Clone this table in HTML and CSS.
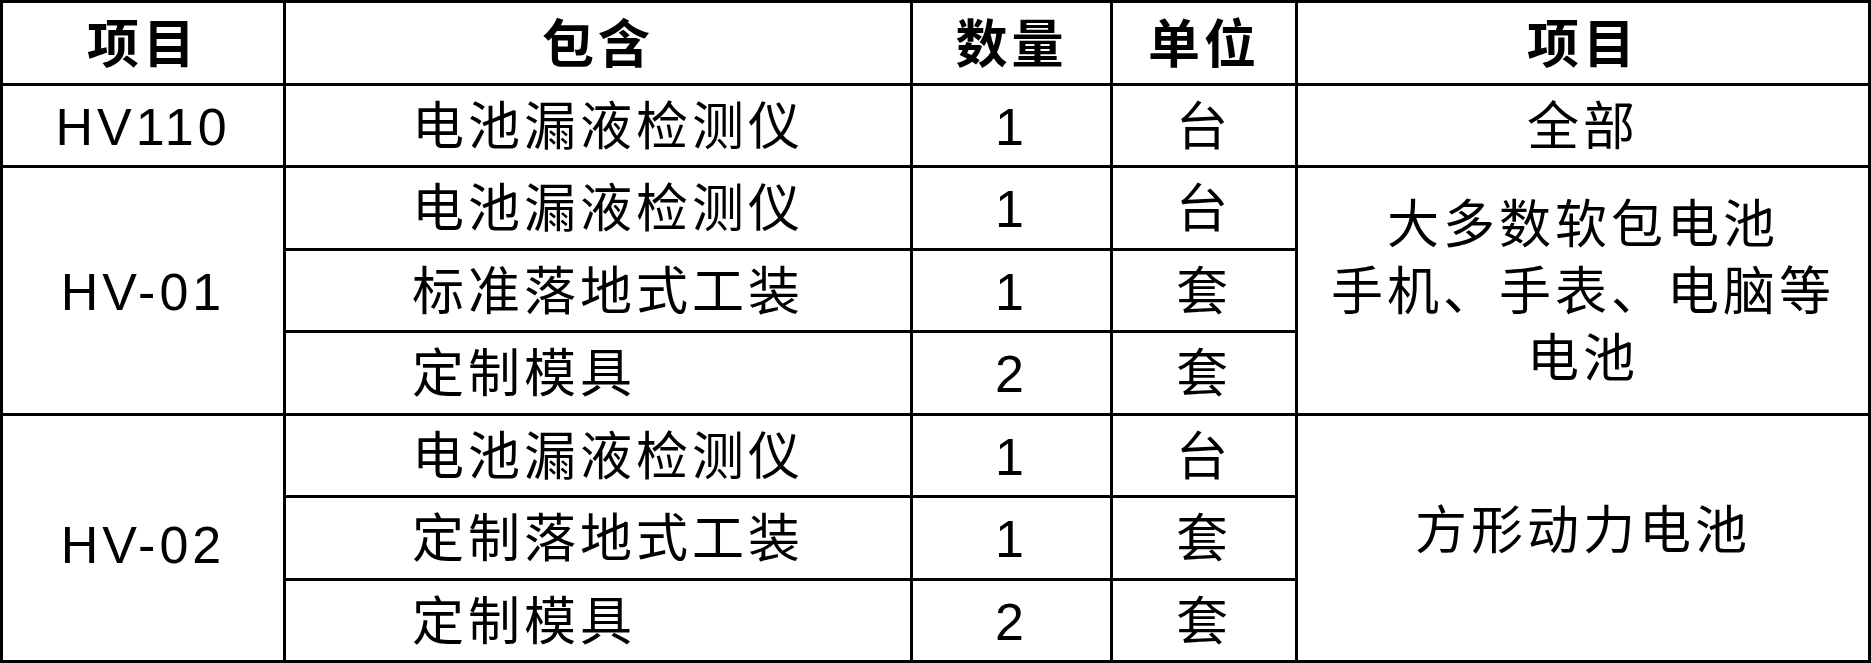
FILE: index.html
```html
<!DOCTYPE html>
<html lang="zh-CN">
<head>
<meta charset="utf-8">
<title>产品配置表</title>
<link rel="stylesheet" href="styles.css">
</head>
<body>
<table class="spec">
  <colgroup>
    <col class="c-model">
    <col class="c-items">
    <col class="c-qty">
    <col class="c-unit">
    <col class="c-scope">
  </colgroup>
  <thead>
    <tr>
      <th>项目</th>
      <th>包含</th>
      <th>数量</th>
      <th>单位</th>
      <th>项目</th>
    </tr>
  </thead>
  <tbody>
    <tr>
      <td class="model">HV110</td>
      <td class="item">电池漏液检测仪</td>
      <td class="num">1</td>
      <td>台</td>
      <td class="scope">全部</td>
    </tr>
    <tr>
      <td class="model" rowspan="3">HV-01</td>
      <td class="item">电池漏液检测仪</td>
      <td class="num">1</td>
      <td>台</td>
      <td class="scope" rowspan="3">大多数软包电池<br>手机、手表、电脑等<br>电池</td>
    </tr>
    <tr>
      <td class="item">标准落地式工装</td>
      <td class="num">1</td>
      <td>套</td>
    </tr>
    <tr>
      <td class="item">定制模具</td>
      <td class="num">2</td>
      <td>套</td>
    </tr>
    <tr>
      <td class="model model-low" rowspan="3">HV-02</td>
      <td class="item">电池漏液检测仪</td>
      <td class="num">1</td>
      <td>台</td>
      <td class="scope scope-high" rowspan="3">方形动力电池</td>
    </tr>
    <tr>
      <td class="item">定制落地式工装</td>
      <td class="num">1</td>
      <td>套</td>
    </tr>
    <tr>
      <td class="item">定制模具</td>
      <td class="num">2</td>
      <td>套</td>
    </tr>
  </tbody>
</table>
</body>
</html>
```

FILE: styles.css
```css
html, body {
  margin: 0;
  padding: 0;
  background: #ffffff;
}

body {
  font-family: "Liberation Sans", "Noto Sans CJK SC", sans-serif;
  color: #000000;
}

.spec {
  width: 1871px;
  table-layout: fixed;
  border-collapse: separate;
  border-spacing: 0;
  border-top: 3px solid #000;
  border-left: 3px solid #000;
}

.c-model { width: 283px; }
.c-items { width: 627px; }
.c-qty   { width: 200px; }
.c-unit  { width: 185px; }
.c-scope { width: 573px; }

.spec tr {
  height: 82.5px;
}

.spec th,
.spec td {
  padding: 0;
  border-right: 3px solid #000;
  border-bottom: 3px solid #000;
  text-align: center;
  vertical-align: middle;
  font-size: 52px;
  letter-spacing: 4px;
  line-height: 1.2;
  white-space: nowrap;
}

.spec th {
  font-weight: bold;
  padding-top: 5px;
}

.spec td {
  font-weight: normal;
  padding-top: 3px;
}

.spec td.item {
  text-align: left;
  padding-left: 126px;
}

.spec td.model {
  letter-spacing: 4px;
}

.spec td.model-low {
  padding-top: 14px;
}

.spec td.scope {
  line-height: 67px;
  padding-top: 4px;
}

.spec td.scope-high {
  padding-top: 0;
  padding-bottom: 12px;
}
```
